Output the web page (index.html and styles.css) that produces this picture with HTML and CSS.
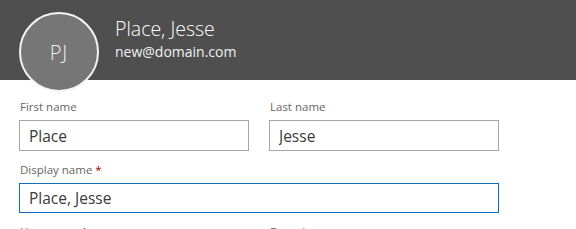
FILE: index.html
```
<!DOCTYPE html>
<html lang="en">

<head>
    <meta charset="UTF-8">
    <meta name="viewport" content="width=device-width, initial-scale=1.0">
    <title>Edit user</title>
    <link rel="stylesheet" href="styles.css">
</head>

<body>
    <div class="user-header">
        <div class="avatar">PJ</div>
        <div class="identity">
            <div class="identity-name">Place, Jesse</div>
            <div class="identity-email">new@domain.com</div>
        </div>
    </div>

    <form class="user-form">
        <div class="field">
            <label for="firstName">First name</label>
            <input type="text" id="firstName" value="Place">
        </div>
        <div class="field">
            <label for="lastName">Last name</label>
            <input type="text" id="lastName" value="Jesse">
        </div>
        <div class="field field-wide">
            <label for="displayName">Display name <span class="required">*</span></label>
            <input type="text" id="displayName" class="is-focused" value="Place, Jesse">
        </div>
        <div class="field">
            <label for="userName">User name <span class="required">*</span></label>
        </div>
        <div class="field">
            <label for="domain">Domain</label>
        </div>
    </form>
</body>

</html>
```

FILE: styles.css
```
body {
    margin: 0;
    font-family: "Open Sans", "Noto Sans", Arial, sans-serif;
    background-color: #ffffff;
    color: #333333;
    overflow: hidden;
}

.user-header {
    display: flex;
    align-items: flex-start;
    height: 80px;
    padding: 12px 0 0 19px;
    box-sizing: border-box;
    background-color: #4f4f4f;
    color: #ffffff;
}

.avatar {
    width: 80px;
    height: 80px;
    flex: none;
    box-sizing: border-box;
    border: 2px solid #f4f4f4;
    border-radius: 50%;
    background-color: #767676;
    display: flex;
    align-items: center;
    justify-content: center;
    font-size: 20px;
    font-weight: 300;
    letter-spacing: 1px;
    color: #f0f0f0;
}

.identity {
    margin-left: 16px;
    margin-top: 4px;
}

.identity-name {
    font-size: 19.5px;
    font-weight: 300;
    line-height: 26px;
}

.identity-email {
    font-size: 14px;
    line-height: 19px;
    color: #f2f2f2;
}

.user-form {
    display: grid;
    grid-template-columns: 230px 230px;
    column-gap: 20px;
    padding: 19px 0 0 19px;
}

.field {
    margin-bottom: 11px;
}

.field-wide {
    grid-column: 1 / 3;
}

.field label {
    display: block;
    padding-left: 1px;
    font-size: 11.5px;
    line-height: 16px;
    color: #666666;
    margin-bottom: 5px;
}

.required {
    color: #a80000;
}

.field input {
    display: block;
    width: 100%;
    height: 31px;
    box-sizing: border-box;
    margin: 0;
    padding: 0 9px;
    border: 1px solid #a6a6a6;
    font-family: inherit;
    font-size: 15.5px;
    color: #3a3a3a;
    outline: none;
}

.field input.is-focused {
    height: 30px;
    border-color: #106ebe;
}
```
